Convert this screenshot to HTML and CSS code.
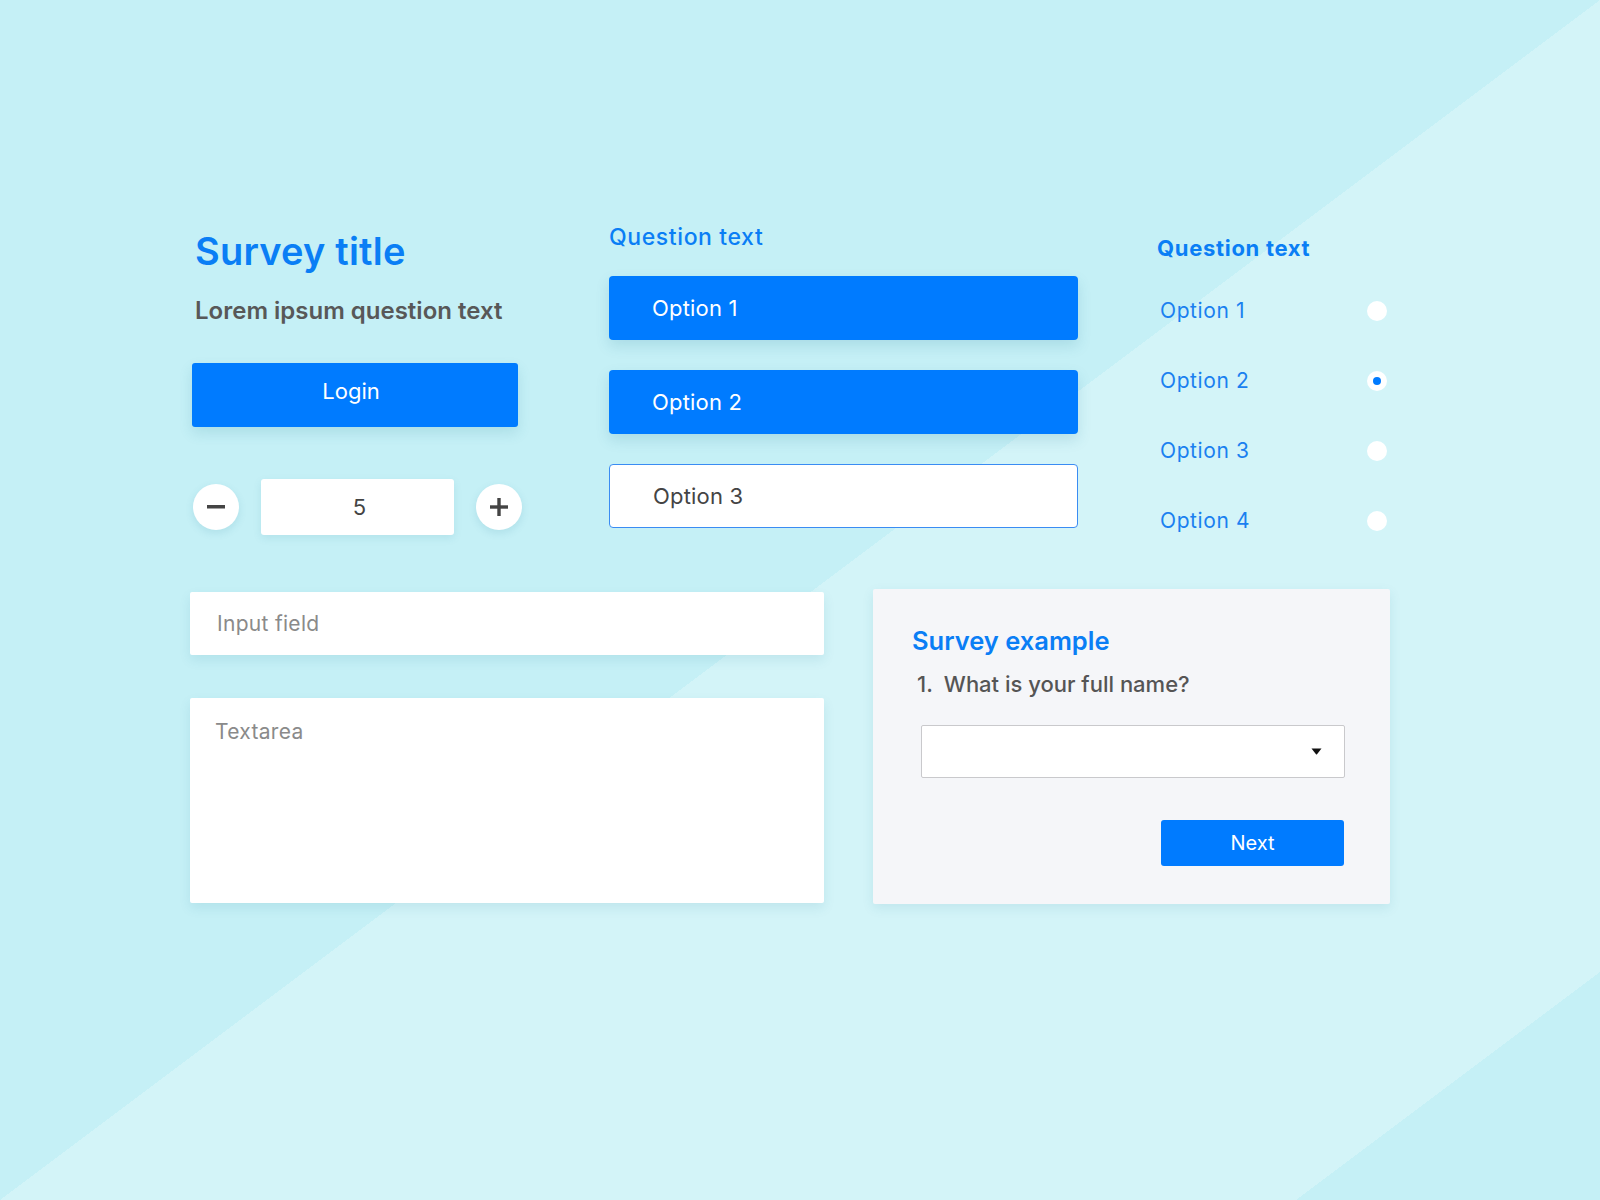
FILE: index.html
```html
<!DOCTYPE html>
<html lang="en">
<head>
<meta charset="utf-8">
<title>Survey UI kit</title>
<link rel="stylesheet" href="styles.css">
</head>
<body>
<main class="board">
  <section class="top">
    <div class="col col-intro">
      <h1 class="survey-title">Survey title</h1>
      <p class="lead">Lorem ipsum question text</p>
      <button class="btn btn-login" type="button">Login</button>
      <div class="stepper">
        <button class="step-btn" type="button" aria-label="decrease">
          <svg width="18" height="4" viewBox="0 0 18 4"><rect x="0" y="0" width="18" height="3.5" fill="#444"/></svg>
        </button>
        <div class="step-value">5</div>
        <button class="step-btn" type="button" aria-label="increase">
          <svg width="18" height="18" viewBox="0 0 18 18"><rect x="0" y="7.3" width="18" height="3.4" fill="#444"/><rect x="7.3" y="0" width="3.4" height="18" fill="#444"/></svg>
        </button>
      </div>
    </div>

    <div class="col col-choices">
      <h2 class="q-label">Question text</h2>
      <div class="choice choice-active">Option 1</div>
      <div class="choice choice-active">Option 2</div>
      <div class="choice choice-idle">Option 3</div>
    </div>

    <div class="col col-radios">
      <h2 class="q-label q-label-bold">Question text</h2>
      <ul class="radio-list">
        <li class="radio-row"><span class="radio-text">Option 1</span><span class="radio"></span></li>
        <li class="radio-row"><span class="radio-text">Option 2</span><span class="radio radio-on"></span></li>
        <li class="radio-row"><span class="radio-text">Option 3</span><span class="radio"></span></li>
        <li class="radio-row"><span class="radio-text">Option 4</span><span class="radio"></span></li>
      </ul>
    </div>
  </section>

  <section class="bottom">
    <div class="fields">
      <div class="field field-input">Input field</div>
      <div class="field field-area">Textarea</div>
    </div>
    <div class="card">
      <h3 class="card-title">Survey example</h3>
      <p class="card-question"><span class="q-num">1.</span>What is your full name?</p>
      <div class="select">
        <svg class="select-arrow" width="11" height="7" viewBox="0 0 11 7"><path d="M0.5 0.5 H10.5 L6 6.2 Q5.5 6.8 5 6.2 Z" fill="#111"/></svg>
      </div>
      <div class="card-actions">
        <button class="btn btn-next" type="button">Next</button>
      </div>
    </div>
  </section>
</main>
</body>
</html>
```

FILE: styles.css
```css
* { box-sizing: border-box; }

html, body {
  margin: 0;
  padding: 0;
  height: 100%;
}

body {
  font-family: "Inter", "Liberation Sans", sans-serif;
  background: linear-gradient(to bottom right,
    #c5f0f6 0%, #c5f0f6 50%,
    #d3f4f8 50%, #d3f4f8 90.5%,
    #c5f0f6 90.5%, #c5f0f6 100%);
  min-height: 1200px;
  color: #555;
}

.board {
  padding: 224px 0 0 190px;
  width: 1400px;
}

/* ---------- top row ---------- */
.top {
  display: grid;
  grid-template-columns: 419px 548px 233px;
  align-items: start;
}

.col-intro { padding: 5px 0 0 2px; }
.col-choices { padding: 0; }
.col-radios { padding: 11px 0 0 0; }

.survey-title {
  margin: 0 0 24px 3px;
  font-size: 38px;
  line-height: 44px;
  font-weight: 600;
  color: #0a7ef5;
  letter-spacing: 0.2px;
}

.lead {
  margin: 0 0 38px 3px;
  font-size: 24px;
  line-height: 28px;
  font-weight: 600;
  color: #585858;
}

.btn {
  border: 0;
  font-family: inherit;
  color: #fff;
  background: #007bff;
  cursor: pointer;
}

.btn-login {
  display: block;
  width: 326px;
  height: 64px;
  border-radius: 3px;
  font-size: 22px;
  padding: 0 8px 9px 0;
  box-shadow: 0 6px 14px rgba(20, 110, 140, 0.14);
}

.stepper {
  margin-top: 52px;
  display: flex;
  align-items: center;
  gap: 22px;
  height: 56px;
  padding-left: 1px;
}

.step-btn {
  width: 46px;
  height: 46px;
  border-radius: 50%;
  border: 0;
  background: #fff;
  display: flex;
  align-items: center;
  justify-content: center;
  padding: 0;
  box-shadow: 0 3px 8px rgba(20, 110, 140, 0.12);
}

.step-value {
  width: 193px;
  height: 56px;
  background: #fff;
  border-radius: 3px;
  display: flex;
  align-items: center;
  justify-content: center;
  padding-left: 4px;
  font-size: 22px;
  color: #444;
  box-shadow: 0 3px 8px rgba(20, 110, 140, 0.1);
}

.q-label {
  margin: 0;
  font-size: 23px;
  line-height: 27px;
  font-weight: 500;
  letter-spacing: 0.6px;
  color: #0a7ef5;
}

.q-label-bold {
  font-weight: 700;
  font-size: 22px;
  letter-spacing: 0.7px;
}

.col-choices .q-label { margin-bottom: 25px; }

.choice {
  width: 469px;
  height: 64px;
  border-radius: 4px;
  display: flex;
  align-items: center;
  padding-left: 43px;
  font-size: 22px;
  letter-spacing: 0.2px;
  margin-bottom: 30px;
}

.choice-active {
  background: #007bff;
  color: #fff;
  box-shadow: 0 6px 14px rgba(20, 110, 140, 0.15);
}

.choice-idle {
  background: #fff;
  color: #444;
  border: 1px solid #3a8cf3;
}

.radio-list {
  list-style: none;
  margin: 14px 0 0 0;
  padding: 0;
  width: 230px;
}

.radio-row {
  height: 70px;
  display: flex;
  align-items: center;
  justify-content: space-between;
  padding-left: 3px;
}

.radio-text {
  font-size: 21px;
  line-height: 24px;
  letter-spacing: 0.6px;
  color: #1a80f0;
  font-weight: 400;
}

.radio {
  width: 20px;
  height: 20px;
  border-radius: 50%;
  background: #fff;
  display: flex;
  align-items: center;
  justify-content: center;
}

.radio-on::after {
  content: "";
  width: 8px;
  height: 8px;
  border-radius: 50%;
  background: #007bff;
}

/* ---------- bottom row ---------- */
.bottom {
  margin-top: 31px;
  display: flex;
  align-items: flex-start;
  gap: 49px;
}

.fields {
  padding-top: 3px;
  display: flex;
  flex-direction: column;
  gap: 43px;
}

.field {
  width: 634px;
  background: #fff;
  border-radius: 2px;
  font-size: 21px;
  line-height: 24px;
  letter-spacing: 0.3px;
  color: #8a8a8a;
  box-shadow: 0 5px 12px rgba(20, 110, 140, 0.1);
}

.field-input {
  height: 63px;
  display: flex;
  align-items: center;
  padding-left: 27px;
}

.field-area {
  height: 205px;
  padding: 22px 0 0 25px;
}

.card {
  width: 517px;
  height: 315px;
  background: #f5f6f9;
  border-radius: 2px;
  padding: 37px 46px 0 39px;
  box-shadow: 0 4px 12px rgba(20, 110, 140, 0.1);
}

.card-title {
  margin: 0;
  font-size: 25.5px;
  line-height: 30px;
  font-weight: 600;
  color: #0a7ef5;
}

.card-question {
  margin: 15px 0 0 5px;
  font-size: 22px;
  line-height: 27px;
  font-weight: 500;
  color: #555;
}

.q-num { margin-right: 11px; }

.select {
  margin: 27px 0 0 9px;
  width: 424px;
  height: 53px;
  background: #fff;
  border: 1px solid #c9c9cc;
  border-radius: 2px;
  display: flex;
  align-items: center;
  justify-content: flex-end;
  padding-right: 22px;
}

.card-actions {
  margin-top: 42px;
  display: flex;
  justify-content: flex-end;
}

.btn-next {
  width: 183px;
  height: 46px;
  border-radius: 3px;
  font-size: 20px;
  padding: 0;
}
```
